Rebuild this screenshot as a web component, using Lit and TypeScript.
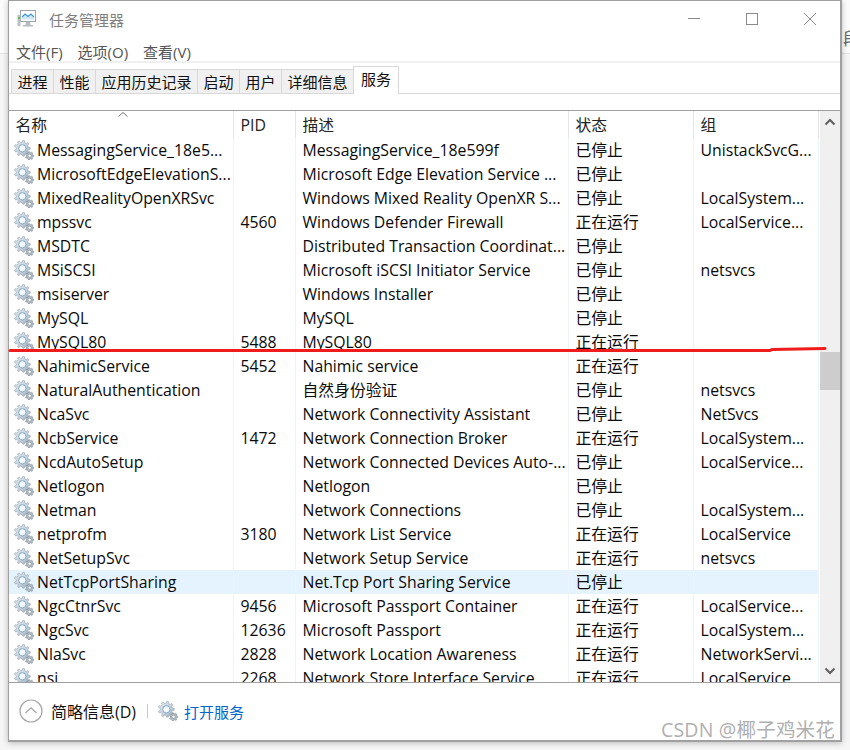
import { LitElement, html, css, svg } from "lit";
import { customElement } from "lit/decorators.js";

const rows: string[][] = [
  ["MessagingService_18e5...", "", "MessagingService_18e599f", "已停止", "UnistackSvcG..."],
  ["MicrosoftEdgeElevationS...", "", "Microsoft Edge Elevation Service ...", "已停止", ""],
  ["MixedRealityOpenXRSvc", "", "Windows Mixed Reality OpenXR S...", "已停止", "LocalSystem..."],
  ["mpssvc", "4560", "Windows Defender Firewall", "正在运行", "LocalService..."],
  ["MSDTC", "", "Distributed Transaction Coordinat...", "已停止", ""],
  ["MSiSCSI", "", "Microsoft iSCSI Initiator Service", "已停止", "netsvcs"],
  ["msiserver", "", "Windows Installer", "已停止", ""],
  ["MySQL", "", "MySQL", "已停止", ""],
  ["MySQL80", "5488", "MySQL80", "正在运行", ""],
  ["NahimicService", "5452", "Nahimic service", "正在运行", ""],
  ["NaturalAuthentication", "", "自然身份验证", "已停止", "netsvcs"],
  ["NcaSvc", "", "Network Connectivity Assistant", "已停止", "NetSvcs"],
  ["NcbService", "1472", "Network Connection Broker", "正在运行", "LocalSystem..."],
  ["NcdAutoSetup", "", "Network Connected Devices Auto-...", "已停止", "LocalService..."],
  ["Netlogon", "", "Netlogon", "已停止", ""],
  ["Netman", "", "Network Connections", "已停止", "LocalSystem..."],
  ["netprofm", "3180", "Network List Service", "正在运行", "LocalService"],
  ["NetSetupSvc", "", "Network Setup Service", "正在运行", "netsvcs"],
  ["NetTcpPortSharing", "", "Net.Tcp Port Sharing Service", "已停止", ""],
  ["NgcCtnrSvc", "9456", "Microsoft Passport Container", "正在运行", "LocalService..."],
  ["NgcSvc", "12636", "Microsoft Passport", "正在运行", "LocalSystem..."],
  ["NlaSvc", "2828", "Network Location Awareness", "正在运行", "NetworkServi..."],
  ["nsi", "2268", "Network Store Interface Service", "正在运行", "LocalService"],
];
const tabs = ["进程", "性能", "应用历史记录", "启动", "用户", "详细信息", "服务"];

function gearShape(cx: number, cy: number, r: number, inner: number, teeth: number) {
  let d = "";
  const step = (Math.PI * 2) / teeth;
  for (let i = 0; i < teeth; i++) {
    const a = i * step;
    const pts: [number, number][] = [
      [a - step * 0.3, r * 0.76],
      [a - step * 0.16, r],
      [a + step * 0.16, r],
      [a + step * 0.3, r * 0.76],
    ];
    for (const [an, rad] of pts) {
      d += `${i === 0 && an === pts[0][0] ? "M" : "L"}${(cx + Math.cos(an) * rad).toFixed(2)} ${(cy + Math.sin(an) * rad).toFixed(2)}`;
    }
  }
  d += "Z";
  d += `M${cx + inner} ${cy}A${inner} ${inner} 0 1 0 ${cx - inner} ${cy}A${inner} ${inner} 0 1 0 ${cx + inner} ${cy}Z`;
  return d;
}
const bigGear = gearShape(8.3, 8.3, 8, 3.8, 9);
const smallGear = gearShape(15.6, 15.8, 4.2, 1.6, 7);

const gear = (size = 20) => html`<svg class="gear" width=${size} height=${size} viewBox="0 0 20 20">
  ${svg`<defs><linearGradient id="g" x1="0" y1="0" x2="1" y2="1"><stop offset="0" stop-color="#e8edf1"/><stop offset="0.6" stop-color="#c2cfda"/><stop offset="1" stop-color="#94a9ba"/></linearGradient></defs>
  <path d=${bigGear} fill="url(#g)" fill-rule="evenodd" stroke="#97a5b0" stroke-width="0.6"/>
  <circle cx="8.3" cy="8.3" r="3.6" fill="#f3f9fd" stroke="#7fa9cc" stroke-width="0.9"/>
  <path d=${smallGear} fill="#b3bfc8" fill-rule="evenodd" stroke="#6f7d88" stroke-width="0.5"/>`}
</svg>`;

@customElement("app-root")
export class AppRoot extends LitElement {
  static styles = css`
    :host {
      display: block;
      width: 850px;
      height: 750px;
      overflow: hidden;
      position: relative;
      background: linear-gradient(#fcfcfc 0 53px, #e2e2e2 53px 54px, #f6f6f6 54px);
      font-family: "Open Sans", "Noto Sans CJK SC", sans-serif;
      font-size: 15.8px;
      color: #0a0a0a;
    }
    .outer { padding: 0 8px 8px 8px; height: 750px; box-sizing: border-box; }
    .win {
      width: 834px;
      height: 742px;
      box-sizing: border-box;
      background: #fff;
      border: 1px solid #a0a0a0;
      border-width: 1px 2px 2px 1px;
      box-shadow: 0 1px 6px rgba(0, 0, 0, 0.25);
      display: flex;
      flex-direction: column;
    }
    .title { height: 36px; display: flex; align-items: center; padding-left: 8px; gap: 7px; color: #808080; flex: none; }
    .title .name { font-size: 15px; }
    .ctrls { margin-left: auto; display: flex; align-items: center; gap: 0; margin-right: 1px; }
    .ctrl { width: 58px; display: flex; justify-content: center; }
    .menu { height: 24px; box-sizing: border-box; padding: 5px 0 0 7px; display: flex; align-items: center; gap: 15px; color: #555; flex: none; font-size: 15px; }
    .sep { height: 2px; background: #f0f0f0; flex: none; }
    .tabs { height: 31px; box-sizing: border-box; display: flex; align-items: flex-end; padding-left: 2px; border-bottom: 1px solid #d9d9d9; flex: none; }
    .tab {
      height: 24px; box-sizing: border-box; padding: 0 5.5px; display: flex; align-items: center;
      background: #f0f0f0; border: 1px solid #d9d9d9; border-bottom: 0; margin-right: -1px; font-size: 15px; color: #111;
    }
    .tab.on { background: #fff; padding: 0 7px 4px; margin-bottom: -1px; height: 28px; }
    .gap { height: 16px; flex: none; }
    .table { flex: none; height: 571px; border-top: 1px solid #a0a0a0; border-bottom: 1px solid #a0a0a0; display: flex; position: relative; }
    .list { width: 810px; overflow: hidden; flex: none; }
    .row { display: grid; grid-template-columns: 225px 62px 273px 125px 125px; height: 24px; align-items: stretch; }
    .head { height: 27px; position: relative; }
    .cell { padding-left: 6.5px; white-space: nowrap; overflow: hidden; display: flex; align-items: center; border-right: 1px solid #ecf3fa; box-sizing: border-box; line-height: 24px; }
    .head .cell { border-right: 1px solid #e5e5e5; color: #222; }
    .name { gap: 3px; padding-left: 5px; }
    .row.hover { background: #e5f3ff; }
    .gear { flex: none; }
    .sort { position: absolute; left: 108px; top: 0px; }
    .scroll { flex: 1; background: #f0f0f0; display: flex; flex-direction: column; align-items: center; position: relative; border-left: 1px solid #fff; }
    .arrow { height: 22px; display: flex; align-items: center; justify-content: center; flex: none; }
    .spacer { flex: 1; }
    .thumb { position: absolute; top: 241px; left: 0; right: 0; height: 38px; background: #cdcdcd; }
    .foot { flex: 1; display: flex; align-items: center; padding: 0 0 1px 10px; }
    .circle { flex: none; }
    .more { margin-left: 8px; font-size: 16px; color: #111; }
    .divider { width: 1px; height: 14px; background: #c8c8c8; margin: 0 10px 0 11px; }
    .link { color: #0066cc; margin-left: 6px; font-size: 15px; }
    .mark { position: absolute; right: 15px; bottom: 7px; font-size: 19.5px; color: #b0b0b0; letter-spacing: 0.2px; }
    .edge { position: absolute; left: 843px; top: 25px; font-size: 17px; color: #666; }
    .ink { position: absolute; left: 0; top: 0; pointer-events: none; }
  `;

  render() {
    return html`
      <div class="outer">
        <div class="win">
          <div class="title">
            <svg width="20" height="20" viewBox="0 0 20 20">
              <rect x="3.5" y="1.5" width="15" height="11" fill="#fff" stroke="#9aa5ab"/>
              <path d="M5 10V8l3-3 3 2.5L14 5l3 3v2.5H5z" fill="#cfe6f5"/>
              <path d="M5 8l3-3 3 2.5L14 5l3 3" fill="none" stroke="#3f97cf" stroke-width="1.2"/>
              <rect x="0.5" y="6" width="3" height="11" fill="#b9c1c6"/>
              <rect x="1" y="8" width="2" height="2" fill="#5fc04f"/>
              <path d="M9 13h4l.6 3H16v1.5H6V16h2.4z" fill="#b5bcc1"/>
            </svg>
            <span class="name">任务管理器</span>
            <div class="ctrls">
              <div class="ctrl"><svg width="14" height="14"><path d="M1 6.5h12" stroke="#8c8c8c"/></svg></div>
              <div class="ctrl"><svg width="14" height="14"><rect x="1.5" y="1.5" width="11" height="11" fill="none" stroke="#8c8c8c"/></svg></div>
              <div class="ctrl"><svg width="14" height="14"><path d="M1 1l12 12M13 1L1 13" stroke="#8c8c8c"/></svg></div>
            </div>
          </div>
          <div class="menu"><span>文件(F)</span><span>选项(O)</span><span>查看(V)</span></div>
          <div class="sep"></div>
          <div class="tabs">
            ${tabs.map((t, i) => html`<div class="tab ${i === 6 ? "on" : ""}">${t}</div>`)}
          </div>
          <div class="gap"></div>
          <div class="table">
            <div class="list">
              <div class="row head">
                <div class="cell">名称</div><div class="cell">PID</div><div class="cell">描述</div><div class="cell">状态</div><div class="cell">组</div>
                <svg class="sort" width="12" height="7"><path d="M1.5 5.5 6 1.5l4.5 4" fill="none" stroke="#777"/></svg>
              </div>
              ${rows.map(
                (r) => html`<div class="row ${r[0] === "NetTcpPortSharing" ? "hover" : ""}">
                  <div class="cell name">${gear()}<span>${r[0]}</span></div>
                  <div class="cell">${r[1]}</div>
                  <div class="cell">${r[2]}</div>
                  <div class="cell">${r[3]}</div>
                  <div class="cell">${r[4]}</div>
                </div>`
              )}
            </div>
            <div class="scroll">
              <div class="arrow"><svg width="12" height="8"><path d="M1.5 6.5 6 2l4.5 4.5" fill="none" stroke="#606060" stroke-width="2"/></svg></div>
              <div class="thumb"></div>
              <div class="spacer"></div>
              <div class="arrow"><svg width="12" height="8"><path d="M1.5 1.5 6 6l4.5-4.5" fill="none" stroke="#606060" stroke-width="2"/></svg></div>
            </div>
          </div>
          <div class="foot">
            <svg class="circle" width="24" height="24"><circle cx="12" cy="12" r="11" fill="#fff" stroke="#a6a6a6" stroke-width="1.2"/><path d="M6.5 14 12 8.8l5.5 5.2" fill="none" stroke="#a6a6a6" stroke-width="1.2"/></svg>
            <span class="more">简略信息(D)</span>
            <span class="divider"></span>
            ${gear(20)}
            <span class="link">打开服务</span>
          </div>
        </div>
      </div>
      <svg class="ink" width="850" height="750">
        <path d="M10 350.5 C200 350 400 351 770 350.5 L772 349.5 L825 348.5" fill="none" stroke="#f01c1c" stroke-width="3" stroke-linecap="round"/>
      </svg>
      <div class="mark">CSDN @椰子鸡米花</div>
      <div class="edge">段</div>
    `;
  }
}
